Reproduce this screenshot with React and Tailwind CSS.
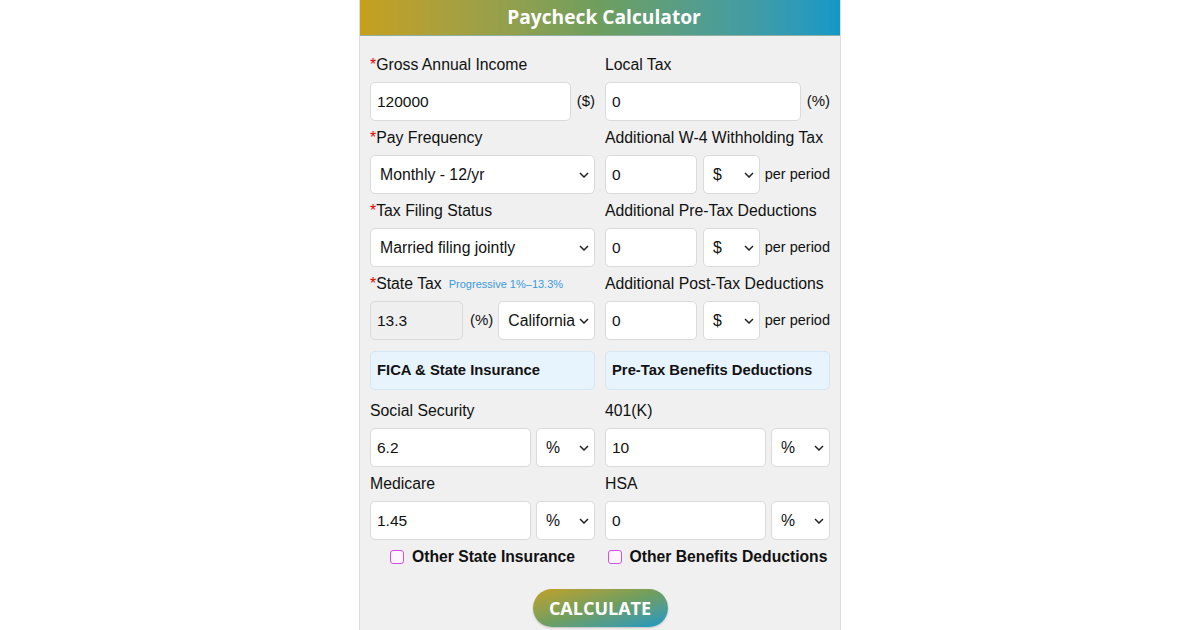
import React from "react";

const font = { fontFamily: '"Liberation Sans", Arial, sans-serif' };

function Chevron() {
  return (
    <svg width="10" height="6" viewBox="0 0 10 6" className="absolute right-[5px] top-1/2 -translate-y-1/2 pointer-events-none">
      <path d="M1 1 L5 5 L9 1" fill="none" stroke="#222" strokeWidth="1.5" />
    </svg>
  );
}

function Select({ value, className = "" }) {
  return (
    <div className={`relative h-[39px] bg-white border border-[#dadada] rounded-[5px] ${className}`}>
      <select
        defaultValue={value}
        className="appearance-none w-full h-full bg-transparent pl-[9px] pr-[18px] text-[15.8px] text-[#111] outline-none"
      >
        <option>{value}</option>
      </select>
      <Chevron />
    </div>
  );
}

function Input({ value, className = "", disabled }) {
  return (
    <input
      defaultValue={value}
      readOnly
      className={`h-[39px] border border-[#dadada] rounded-[5px] pl-[6px] text-[15.5px] text-[#111] outline-none ${disabled ? "bg-[#efefef]" : "bg-white"} ${className}`}
    />
  );
}

function Label({ children, req, extra }) {
  return (
    <div className="h-[34px] flex items-center text-[15.8px] text-[#111]">
      {req && <span className="text-[#e00000]">*</span>}
      <span>{children}</span>
      {extra && <span className="ml-[7px] text-[11px] text-[#3a9ae0]">{extra}</span>}
    </div>
  );
}

function PerPeriod({ label, value }) {
  return (
    <div>
      <Label>{label}</Label>
      <div className="flex items-center">
        <Input value={value} className="w-[92px]" />
        <Select value="$" className="w-[58px] ml-[6px]" />
        <span className="ml-[5px] text-[14.5px] text-[#111] whitespace-nowrap">per period</span>
      </div>
    </div>
  );
}

function Pct({ label, value }) {
  return (
    <div>
      <Label>{label}</Label>
      <div className="flex items-center gap-[5px]">
        <Input value={value} className="flex-1 min-w-0" />
        <Select value="%" className="w-[59px]" />
      </div>
    </div>
  );
}

function Check({ label }) {
  return (
    <label className="h-[34px] flex items-center justify-center gap-[8px]">
      <span className="w-[14px] h-[14px] rounded-[3px] border-[1.5px] border-[#d44ee0] bg-[#fdf6fe]" />
      <span className="text-[15.7px] font-bold text-[#111]">{label}</span>
    </label>
  );
}

export default function App() {
  return (
    <div className="w-full h-[630px] bg-white overflow-hidden" style={font}>
      <div className="w-[482px] mx-auto h-full bg-[#f0f0f0] border-x border-[#dcdcdc]">
        <div className="h-[36px] flex items-center justify-center bg-gradient-to-r from-[#c6a01a] via-[#6e9e5e] to-[#1298c8] border-b border-[#8fb0a0]">
          <h1 className="ml-[8px] text-white text-[19.2px] font-bold" style={{ fontFamily: '"Open Sans", sans-serif' }}>
            Paycheck Calculator
          </h1>
        </div>

        <div className="px-[10px] pt-[12px]">
          <div className="grid grid-cols-2 gap-x-[10px]">
            <div>
              <Label req>Gross Annual Income</Label>
              <div className="flex items-center gap-[6px]">
                <Input value="120000" className="flex-1 min-w-0" />
                <span className="text-[15px] text-[#111]">($)</span>
              </div>
            </div>
            <div>
              <Label>Local Tax</Label>
              <div className="flex items-center gap-[6px]">
                <Input value="0" className="flex-1 min-w-0" />
                <span className="text-[15px] text-[#111]">(%)</span>
              </div>
            </div>

            <div>
              <Label req>Pay Frequency</Label>
              <Select value="Monthly - 12/yr" />
            </div>
            <PerPeriod label="Additional W-4 Withholding Tax" value="0" />

            <div>
              <Label req>Tax Filing Status</Label>
              <Select value="Married filing jointly" />
            </div>
            <PerPeriod label="Additional Pre-Tax Deductions" value="0" />

            <div>
              <Label req extra="Progressive 1%–13.3%">State Tax</Label>
              <div className="flex items-center">
                <Input value="13.3" disabled className="w-[93px]" />
                <span className="ml-[7px] text-[15px] text-[#111]">(%)</span>
                <Select value="California" className="flex-1 ml-[5px]" />
              </div>
            </div>
            <PerPeriod label="Additional Post-Tax Deductions" value="0" />

            <div className="mt-[11px] h-[39px] flex items-center pl-[6px] bg-[#e8f4fd] border border-[#d6e6f2] rounded-[5px] text-[14.8px] font-bold text-[#111]">
              FICA &amp; State Insurance
            </div>
            <div className="mt-[11px] h-[39px] flex items-center pl-[6px] bg-[#e8f4fd] border border-[#d6e6f2] rounded-[5px] text-[14.8px] font-bold text-[#111]">
              Pre-Tax Benefits Deductions
            </div>

            <div className="mt-[4px]">
              <Pct label="Social Security" value="6.2" />
            </div>
            <div className="mt-[4px]">
              <Pct label="401(K)" value="10" />
            </div>
            <Pct label="Medicare" value="1.45" />
            <Pct label="HSA" value="0" />

            <Check label="Other State Insurance" />
            <Check label="Other Benefits Deductions" />
          </div>

          <div className="flex justify-center mt-[15px]">
            <button
              className="w-[135px] h-[38px] rounded-full bg-gradient-to-br from-[#c0a01c] via-[#6f9e5e] to-[#0f97c4] text-white text-[18px] font-bold shadow-[0_1px_2px_rgba(0,0,0,0.2)]"
              style={{ fontFamily: '"Open Sans", sans-serif' }}
            >
              CALCULATE
            </button>
          </div>
        </div>
      </div>
    </div>
  );
}
